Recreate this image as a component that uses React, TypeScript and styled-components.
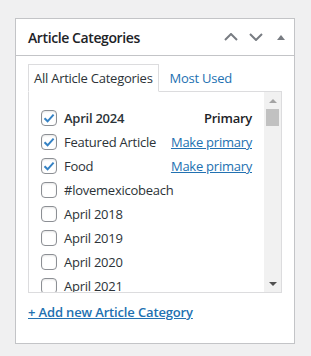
import React from 'react'
import styled, { createGlobalStyle } from 'styled-components'

const GlobalStyle = createGlobalStyle`
    body {
        margin: 0;
        background: #f0f0f1;
        font-family: "Open Sans", "Noto Sans", sans-serif;
        color: #2c3338;
    }
`

const Page = styled.div`
    padding: 18px 16px 12px 15px;
`
const Panel = styled.div`
    width: 280px;
    height: 326px;
    box-sizing: border-box;
    border: 1px solid #c3c4c7;
    background: #fff;
`
const Header = styled.div`
    height: 36px;
    border-bottom: 1px solid #c3c4c7;
    display: flex;
    align-items: center;
    padding-left: 12px;
    padding-right: 1px;
`
const Title = styled.h2`
    flex: 1;
    margin: 0;
    font-size: 14px;
    font-weight: 600;
    letter-spacing: -0.4px;
    color: #1d2327;
`
const HandleButton = styled.button`
    width: 25px;
    height: 36px;
    border: 0;
    padding: 0;
    background: none;
    display: flex;
    align-items: center;
    justify-content: center;
    color: #787c82;
`
const Inside = styled.div`
    padding: 8px 12px 0;
`
const Tabs = styled.div`
    display: flex;
    gap: 5px;
    position: relative;
    z-index: 1;
`
const Tab = styled.div<{ $active?: boolean }>`
    height: 26px;
    line-height: 26px;
    padding: 0 5px;
    font-size: 13px;
    letter-spacing: -0.25px;
    border: 1px solid ${p => (p.$active ? '#dcdcde' : 'transparent')};
    border-bottom-color: ${p => (p.$active ? '#fff' : 'transparent')};
    background: ${p => (p.$active ? '#fff' : 'transparent')};
    color: ${p => (p.$active ? '#2c3338' : '#2271b1')};
`
const TabsPanel = styled.div`
    margin-top: -1px;
    height: 202px;
    box-sizing: border-box;
    border: 1px solid #dcdcde;
    display: flex;
    overflow: hidden;
`
const Checklist = styled.ul`
    flex: 1;
    list-style: none;
    margin: 0;
    padding: 14px 12px 0;
`
const Item = styled.li`
    height: 24px;
    display: flex;
    align-items: center;
    font-size: 13px;
    letter-spacing: -0.25px;
`
const Box = styled.span`
    width: 16px;
    height: 16px;
    box-sizing: border-box;
    border: 1px solid #8c8f94;
    border-radius: 4px;
    box-shadow: inset 0 1px 2px rgba(0, 0, 0, 0.1);
    margin-right: 7px;
    flex: none;
    display: flex;
    align-items: center;
    justify-content: center;
`
const Label = styled.span<{ $bold?: boolean }>`
    flex: 1;
    font-weight: ${p => (p.$bold ? 600 : 400)};
`
const PrimaryTag = styled.span`
    font-weight: 600;
    color: #1d2327;
`
const MakePrimary = styled.a`
    color: #2271b1;
    text-decoration: underline;
`
const Scrollbar = styled.div`
    width: 17px;
    background: #f1f1f1;
    display: flex;
    flex-direction: column;
`
const ScrollButton = styled.div<{ $down?: boolean }>`
    height: 17px;
    display: flex;
    align-items: center;
    justify-content: center;
    &::after {
        content: '';
        border-left: 4px solid transparent;
        border-right: 4px solid transparent;
        ${p =>
            p.$down
                ? 'border-top: 4px solid #505050;'
                : 'border-bottom: 4px solid #a3a3a3;'}
    }
`
const Track = styled.div`
    flex: 1;
`
const Thumb = styled.div`
    height: 17px;
    margin: 0 2px;
    background: #c1c1c1;
`
const AddLink = styled.a`
    display: block;
    margin-top: 10px;
    line-height: 18px;
    font-size: 13px;
    font-weight: 600;
    letter-spacing: -0.15px;
    color: #2271b1;
    text-decoration: underline;
`

const categories = [
    { name: 'April 2024', checked: true, primary: true },
    { name: 'Featured Article', checked: true },
    { name: 'Food', checked: true },
    { name: '#lovemexicobeach' },
    { name: 'April 2018' },
    { name: 'April 2019' },
    { name: 'April 2020' },
    { name: 'April 2021' },
]

const Check = () => (
    <svg width="14" height="14" viewBox="0 0 14 14">
        <path d="M2.5 7.2 L5.6 10.3 L11.6 3.6" fill="none" stroke="#3582c4" strokeWidth="2" />
    </svg>
)

const Chevron = ({ down }: { down?: boolean }) => (
    <svg width="14" height="8" viewBox="0 0 14 8">
        <path d={down ? 'M1 1 L7 7 L13 1' : 'M1 7 L7 1 L13 7'} fill="none" stroke="currentColor" strokeWidth="2" />
    </svg>
)

const App = () => {
    return (
        <Page>
            <GlobalStyle />
            <Panel>
                <Header>
                    <Title>Article Categories</Title>
                    <HandleButton><Chevron /></HandleButton>
                    <HandleButton><Chevron down /></HandleButton>
                    <HandleButton>
                        <svg width="8" height="5" viewBox="0 0 8 5"><path d="M0 5 L4 0 L8 5 Z" fill="currentColor" /></svg>
                    </HandleButton>
                </Header>
                <Inside>
                    <Tabs>
                        <Tab $active>All Article Categories</Tab>
                        <Tab>Most Used</Tab>
                    </Tabs>
                    <TabsPanel>
                        <Checklist>
                            {categories.map(c => (
                                <Item key={c.name}>
                                    <Box>{c.checked && <Check />}</Box>
                                    <Label $bold={c.primary}>{c.name}</Label>
                                    {c.primary && <PrimaryTag>Primary</PrimaryTag>}
                                    {c.checked && !c.primary && <MakePrimary>Make primary</MakePrimary>}
                                </Item>
                            ))}
                        </Checklist>
                        <Scrollbar>
                            <ScrollButton />
                            <Thumb />
                            <Track />
                            <ScrollButton $down />
                        </Scrollbar>
                    </TabsPanel>
                    <AddLink>+ Add new Article Category</AddLink>
                </Inside>
            </Panel>
        </Page>
    )
}

export default App
